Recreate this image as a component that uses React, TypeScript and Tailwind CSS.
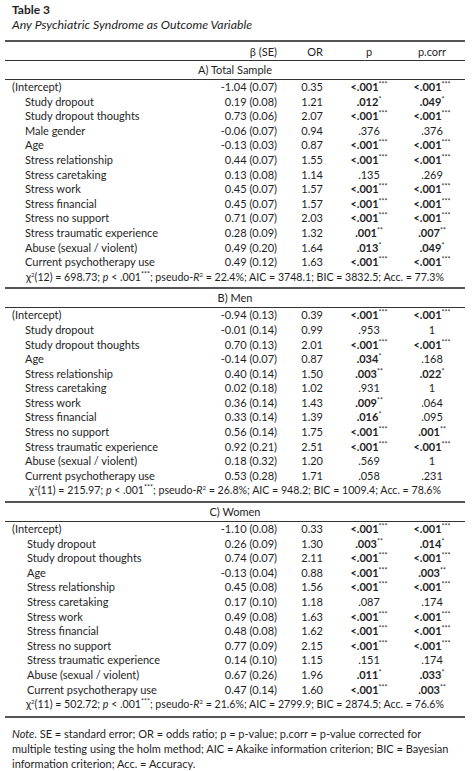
type Row = [string, string, string, string, string];

const total: Row[] = [
  ['(Intercept)', '-1.04 (0.07)', '0.35', '<.001***', '<.001***'],
  ['Study dropout', '0.19 (0.08)', '1.21', '.012*', '.049*'],
  ['Study dropout thoughts', '0.73 (0.06)', '2.07', '<.001***', '<.001***'],
  ['Male gender', '-0.06 (0.07)', '0.94', '.376', '.376'],
  ['Age', '-0.13 (0.03)', '0.87', '<.001***', '<.001***'],
  ['Stress relationship', '0.44 (0.07)', '1.55', '<.001***', '<.001***'],
  ['Stress caretaking', '0.13 (0.08)', '1.14', '.135', '.269'],
  ['Stress work', '0.45 (0.07)', '1.57', '<.001***', '<.001***'],
  ['Stress financial', '0.45 (0.07)', '1.57', '<.001***', '<.001***'],
  ['Stress no support', '0.71 (0.07)', '2.03', '<.001***', '<.001***'],
  ['Stress traumatic experience', '0.28 (0.09)', '1.32', '.001**', '.007**'],
  ['Abuse (sexual / violent)', '0.49 (0.20)', '1.64', '.013*', '.049*'],
  ['Current psychotherapy use', '0.49 (0.12)', '1.63', '<.001***', '<.001***'],
];

const men: Row[] = [
  ['(Intercept)', '-0.94 (0.13)', '0.39', '<.001***', '<.001***'],
  ['Study dropout', '-0.01 (0.14)', '0.99', '.953', '1'],
  ['Study dropout thoughts', '0.70 (0.13)', '2.01', '<.001***', '<.001***'],
  ['Age', '-0.14 (0.07)', '0.87', '.034*', '.168'],
  ['Stress relationship', '0.40 (0.14)', '1.50', '.003**', '.022*'],
  ['Stress caretaking', '0.02 (0.18)', '1.02', '.931', '1'],
  ['Stress work', '0.36 (0.14)', '1.43', '.009**', '.064'],
  ['Stress financial', '0.33 (0.14)', '1.39', '.016*', '.095'],
  ['Stress no support', '0.56 (0.14)', '1.75', '<.001***', '.001**'],
  ['Stress traumatic experience', '0.92 (0.21)', '2.51', '<.001***', '<.001***'],
  ['Abuse (sexual / violent)', '0.18 (0.32)', '1.20', '.569', '1'],
  ['Current psychotherapy use', '0.53 (0.28)', '1.71', '.058', '.231'],
];

const women: Row[] = [
  ['(Intercept)', '-1.10 (0.08)', '0.33', '<.001***', '<.001***'],
  ['Study dropout', '0.26 (0.09)', '1.30', '.003**', '.014*'],
  ['Study dropout thoughts', '0.74 (0.07)', '2.11', '<.001***', '<.001***'],
  ['Age', '-0.13 (0.04)', '0.88', '<.001***', '.003**'],
  ['Stress relationship', '0.45 (0.08)', '1.56', '<.001***', '<.001***'],
  ['Stress caretaking', '0.17 (0.10)', '1.18', '.087', '.174'],
  ['Stress work', '0.49 (0.08)', '1.63', '<.001***', '<.001***'],
  ['Stress financial', '0.48 (0.08)', '1.62', '<.001***', '<.001***'],
  ['Stress no support', '0.77 (0.09)', '2.15', '<.001***', '<.001***'],
  ['Stress traumatic experience', '0.14 (0.10)', '1.15', '.151', '.174'],
  ['Abuse (sexual / violent)', '0.67 (0.26)', '1.96', '.011*', '.033*'],
  ['Current psychotherapy use', '0.47 (0.14)', '1.60', '<.001***', '.003**'],
];

const grid = 'grid grid-cols-[200px_72px_46px_82px_60px]';

function PVal({ v }: { v: string }) {
  const stars = v.match(/\*+$/)?.[0] ?? '';
  const base = v.slice(0, v.length - stars.length);
  return (
    <span className={stars ? 'font-bold' : ''}>
      {base}
      {stars && <span className="relative -top-[4px] text-[7px] font-normal">{stars}</span>}
    </span>
  );
}

function ThickRule() {
  return <div className="h-[2px] bg-[#555]" />;
}

function ThinRule() {
  return <div className="h-px bg-[#333]" />;
}

function Fit({ chi, df, r2, aic, bic, acc }: { chi: string; df: string; r2: string; aic: string; bic: string; acc: string }) {
  return (
    <div className="h-[14.6px] text-center text-[10.6px] leading-[14.6px] whitespace-nowrap">
      χ<span className="relative -top-[4px] text-[6px]">2</span>({df}) = {chi}; <i>p</i> &lt; .001
      <span className="relative -top-[4px] text-[7px]">***</span>; pseudo-<i>R</i>
      <span className="relative -top-[4px] text-[6px]">2</span> = {r2}; AIC = {aic}; BIC = {bic}; Acc. = {acc}
    </div>
  );
}

function Section({ title, rows, indent }: { title: string; rows: Row[]; indent: string }) {
  return (
    <div>
      <div className="h-[18px] pt-[2px] text-center leading-[14px]">{title}</div>
      <ThinRule />
      {rows.map((r, i) => (
        <div key={i} className={`${grid} h-[14.6px] leading-[14.6px]`}>
          <div className={i === 0 ? 'pl-[7px]' : indent}>{r[0]}</div>
          <div className="text-right">{r[1]}</div>
          <div className="text-right">{r[2]}</div>
          <div className="pl-[10px] text-center whitespace-nowrap">
            <PVal v={r[3]} />
          </div>
          <div className="pr-[6px] text-center whitespace-nowrap">
            <PVal v={r[4]} />
          </div>
        </div>
      ))}
    </div>
  );
}

export default function App() {
  return (
    <div
      className="w-[474px] h-[771px] bg-white text-[#1e1e1e] text-[11px]"
      style={{ fontFamily: 'Lato, "Open Sans", sans-serif' }}
    >
      <div className="px-[5px] pt-[3px]">
        <div className="pl-[7px] font-bold text-[12px] leading-[14px]">Table 3</div>
        <div className="pl-[7px] italic text-[12.3px] leading-[16px]">Any Psychiatric Syndrome as Outcome Variable</div>
        <div className="mt-[7px] w-[460px]">
          <ThickRule />
          <div className={`${grid} h-[18px] pt-[3px] leading-[14px]`}>
            <div />
            <div className="text-right">β (SE)</div>
            <div className="text-right">OR</div>
            <div className="pl-[10px] text-center">p</div>
            <div className="pr-[6px] text-center">p.corr</div>
          </div>
          <ThinRule />
          <Section title="A) Total Sample" rows={total} indent="pl-[20px]" />
          <Fit df="12" chi="698.73" r2="22.4%" aic="3748.1" bic="3832.5" acc="77.3%" />
          <div className="h-[3px]" />
          <ThickRule />
          <Section title="B) Men" rows={men} indent="pl-[20px]" />
          <Fit df="11" chi="215.97" r2="26.8%" aic="948.2" bic="1009.4" acc="78.6%" />
          <div className="h-[3px]" />
          <ThickRule />
          <Section title="C) Women" rows={women} indent="pl-[22px]" />
          <Fit df="11" chi="502.72" r2="21.6%" aic="2799.9" bic="2874.5" acc="76.6%" />
          <div className="h-[4px]" />
          <ThickRule />
          <div className="pl-[7px] pt-[8px] leading-[15px] whitespace-nowrap">
            <i>Note</i>. SE = standard error; OR = odds ratio; p = p-value; p.corr = p-value corrected for
            <br />
            multiple testing using the holm method; AIC = Akaike information criterion; BIC = Bayesian
            <br />
            information criterion; Acc. = Accuracy.
          </div>
        </div>
      </div>
    </div>
  );
}
